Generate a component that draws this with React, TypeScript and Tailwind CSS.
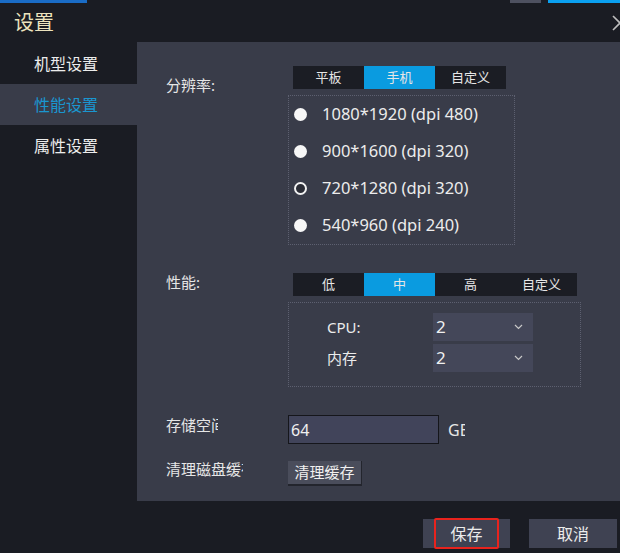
import React from "react";

const font = { fontFamily: '"Noto Sans", "Noto Sans CJK SC", sans-serif' };

function Tabs({ items, active }: { items: string[]; active: number }) {
  return (
    <div className="flex bg-[#1b1d24] h-[23px] ml-[5px] w-fit">
      {items.map((t, i) => (
        <div
          key={t}
          className={`w-[71px] flex items-center justify-center text-[13px] text-[#e6e6e6] ${
            i === active ? "bg-[#0a9be0]" : ""
          }`}
        >
          {t}
        </div>
      ))}
    </div>
  );
}

function Radio({ label, hollow }: { label: string; hollow?: boolean }) {
  return (
    <div className="flex items-center h-[37px] pl-[5px]">
      {hollow ? (
        <span className="shrink-0 w-[13px] h-[13px] rounded-full border-2 border-[#f2f2f2] bg-[#2b2d36]" />
      ) : (
        <span className="shrink-0 w-[13px] h-[13px] rounded-full bg-[#f7f7f7]" />
      )}
      <span className="ml-[15px] text-[16.5px] text-[#ececec] whitespace-nowrap">{label}</span>
    </div>
  );
}

function Select({ value }: { value: string }) {
  return (
    <div className="shrink-0 w-[100px] h-[28px] bg-[#444759] flex items-center justify-between pl-[3px] pr-[10px]">
      <span className="text-[17px] text-[#f0f0f0]">{value}</span>
      <svg width="9" height="6" viewBox="0 0 9 6" fill="none">
        <path d="M1 1l3.5 3.5L8 1" stroke="#c8c8c8" strokeWidth="1.2" />
      </svg>
    </div>
  );
}

// label column; the original window clips long labels, so some get a fixed width
function Label({ text, clip }: { text: string; clip?: string }) {
  return (
    <div className="w-[122px] shrink-0 text-[15px] text-[#e6e6e6]">
      <div className={`${clip ?? "w-fit"} overflow-hidden whitespace-nowrap`}>{text}</div>
    </div>
  );
}

export default function App() {
  const sidebar = ["机型设置", "性能设置", "属性设置"];
  return (
    <div style={font} className="w-[620px] h-[553px] bg-[#1a1c23] flex flex-col overflow-hidden">
      {/* top strip */}
      <div className="flex h-[3px] shrink-0">
        <div className="w-[87px] bg-[#1a6cc6]" />
        <div className="w-[423px]" />
        <div className="w-[31px] bg-[#4e5160]" />
        <div className="w-[7px]" />
        <div className="flex-1 bg-[#0aa0f0]" />
      </div>

      {/* header */}
      <div className="h-[39px] shrink-0 flex items-center justify-between">
        <span className="ml-[14px] text-[20px] text-[#ece3bd]">设置</span>
        <svg width="16" height="16" viewBox="0 0 16 16" className="mr-[-8px]">
          <path d="M1 1l14 14M15 1L1 15" stroke="#bdbdbd" strokeWidth="1.6" />
        </svg>
      </div>

      <div className="flex h-[459px] shrink-0">
        {/* sidebar */}
        <div className="w-[137px] shrink-0 pt-[1px] flex flex-col">
          {sidebar.map((s, i) => (
            <div
              key={s}
              className={`h-[41px] flex items-center pl-[34px] text-[16px] ${
                i === 1 ? "bg-[#393c49] text-[#1a96d0]" : "text-[#ececec]"
              }`}
            >
              {s}
            </div>
          ))}
        </div>

        {/* panel */}
        <div className="w-[483px] bg-[#393c49] pl-[29px] pt-[24px] flex flex-col">
          <div className="flex items-start">
            <div className="pt-[8px]">
              <Label text="分辨率:" />
            </div>
            <div className="flex flex-col">
              <Tabs items={["平板", "手机", "自定义"]} active={1} />
              <div className="mt-[6px] w-[227px] border border-dotted border-[#5d6070]">
                <Radio label="1080*1920 (dpi 480)" />
                <Radio label="900*1600 (dpi 320)" />
                <Radio label="720*1280 (dpi 320)" hollow />
                <Radio label="540*960 (dpi 240)" />
              </div>
            </div>
          </div>

          <div className="flex items-start mt-[28px]">
            <div className="-mt-[2px]">
              <Label text="性能:" />
            </div>
            <div className="flex flex-col">
              <Tabs items={["低", "中", "高", "自定义"]} active={1} />
              <div className="mt-[6px] w-[293px] h-[85px] border border-dotted border-[#5d6070] pt-[10px] flex flex-col gap-[3px]">
                <div className="flex items-center">
                  <span className="w-[144px] shrink-0 pl-[38px] text-[15px] text-[#ececec]">CPU:</span>
                  <Select value="2" />
                </div>
                <div className="flex items-center">
                  <span className="w-[144px] shrink-0 pl-[38px] text-[15px] text-[#ececec]">内存</span>
                  <Select value="2" />
                </div>
              </div>
            </div>
          </div>

          <div className="flex items-start mt-[28px]">
            <div className="-mt-[1px]">
              <Label text="存储空间" clip="w-[52px]" />
            </div>
            <div className="shrink-0 w-[151px] h-[29px] bg-[#41445a] border border-[#15161b] flex items-center pl-[2px] text-[16px] text-[#f0f0f0]">
              64
            </div>
            <div className="ml-[9px] mt-[3px] w-[17px] overflow-hidden whitespace-nowrap text-[16px] text-[#e6e6e6]">GB</div>
          </div>

          <div className="flex items-start mt-[17px]">
            <div className="-mt-[3px]">
              <Label text="清理磁盘缓存" clip="w-[77px]" />
            </div>
            <div className="w-[74px] h-[25px] bg-[#4a4d5b] border-b-2 border-r border-[#23252d] flex items-center justify-center text-[15px] text-[#f0f0f0]">
              清理缓存
            </div>
          </div>
        </div>
      </div>

      {/* footer */}
      <div className="flex justify-end pt-[18px] pr-[3px] gap-[19px]">
        <div className="w-[87px] h-[29px] bg-[#3f4252] flex items-center justify-center">
          <div className="w-[65px] h-[31px] border-2 border-[#e8231d] rounded-[2px] flex items-center justify-center text-[16px] text-[#ececec]">
            保存
          </div>
        </div>
        <div className="w-[88px] h-[29px] bg-[#3f4252] flex items-center justify-center text-[16px] text-[#ececec]">
          取消
        </div>
      </div>
    </div>
  );
}
